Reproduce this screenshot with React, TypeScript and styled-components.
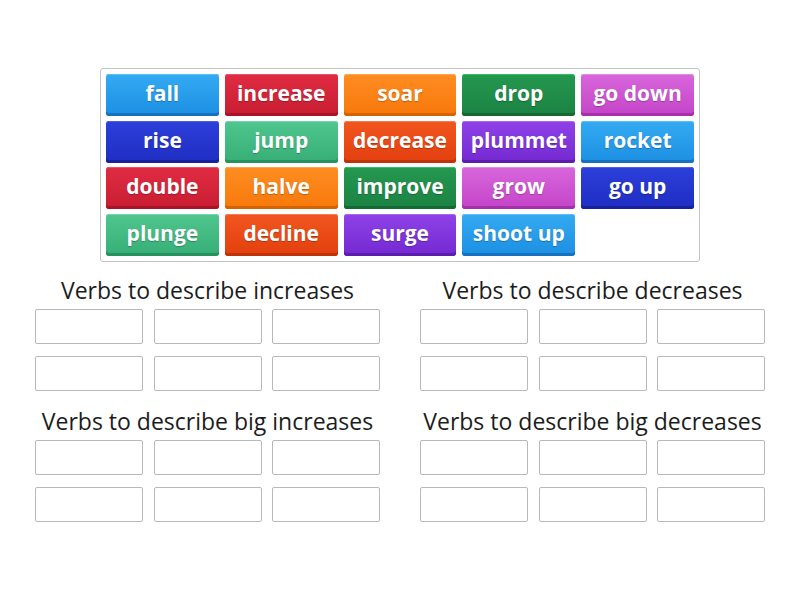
import styled, { createGlobalStyle } from "styled-components";

const GlobalStyle = createGlobalStyle`
  html, body {
    margin: 0;
    padding: 0;
    background: #ffffff;
    font-family: "Open Sans", "Liberation Sans", sans-serif;
  }
`;

type Tone =
  | "sky"
  | "crimson"
  | "orange"
  | "forest"
  | "orchid"
  | "navy"
  | "mint"
  | "flame"
  | "violet";

const tones: Record<Tone, { top: string; bottom: string; edge: string; light: string }> = {
  sky: { top: "#34aaf2", bottom: "#1c8fe2", edge: "#1672c0", light: "#5cc0f8" },
  crimson: { top: "#e02c42", bottom: "#c81d31", edge: "#a81426", light: "#ea5466" },
  orange: { top: "#ff8d22", bottom: "#f7780a", edge: "#d66300", light: "#ffa552" },
  forest: { top: "#25984f", bottom: "#1b8243", edge: "#146a35", light: "#2fc062" },
  orchid: { top: "#d866dc", bottom: "#c444c8", edge: "#a630aa", light: "#e68aea" },
  navy: { top: "#2c40da", bottom: "#1f2dc2", edge: "#17219e", light: "#4d5ee6" },
  mint: { top: "#4ec68e", bottom: "#36ae76", edge: "#27925f", light: "#72d8a8" },
  flame: { top: "#f2561f", bottom: "#e23f0e", edge: "#c03208", light: "#f67a4c" },
  violet: { top: "#8e42e8", bottom: "#7428d0", edge: "#5c1cae", light: "#a768f0" },
};

const Page = styled.div`
  width: 800px;
  padding-top: 68px;
  box-sizing: border-box;
`;

const Board = styled.div`
  width: 600px;
  margin: 0 auto;
  box-sizing: border-box;
  border: 1px solid #c4c4c4;
  border-radius: 3px;
  padding: 5px;
  display: grid;
  grid-template-columns: repeat(5, 1fr);
  grid-auto-rows: 42px;
  column-gap: 6px;
  row-gap: 4.7px;
`;

const Tile = styled.div<{ $tone: Tone }>`
  display: flex;
  align-items: center;
  justify-content: center;
  border-radius: 3px;
  background: linear-gradient(
    180deg,
    ${(p) => tones[p.$tone].top} 0%,
    ${(p) => tones[p.$tone].bottom} 100%
  );
  box-shadow: inset 0 1px 0 ${(p) => tones[p.$tone].light},
    inset 0 -3px 0 ${(p) => tones[p.$tone].edge};
  color: #ffffff;
  font-family: "Open Sans", "Liberation Sans", sans-serif;
  font-weight: 700;
  font-size: 21px;
  line-height: 1;
  padding-bottom: 3px;
  box-sizing: border-box;
  text-shadow: 0 1px 1px rgba(0, 0, 0, 0.25);
`;

const Groups = styled.div`
  display: grid;
  grid-template-columns: 345px 345px;
  column-gap: 40px;
  row-gap: 15px;
  padding: 13px 35px 0;
`;

const Group = styled.div`
  display: flex;
  flex-direction: column;
`;

const GroupTitle = styled.div`
  height: 30px;
  line-height: 30px;
  text-align: center;
  font-size: 23px;
  color: #1c1c1c;
  white-space: nowrap;
  margin-bottom: 4px;
`;

const Slots = styled.div`
  display: grid;
  grid-template-columns: repeat(3, 1fr);
  grid-auto-rows: 35px;
  column-gap: 10.5px;
  row-gap: 12px;
`;

const Slot = styled.div`
  border: 1px solid #b9b9b9;
  border-radius: 2px;
  background: #ffffff;
`;

const words: [string, Tone][] = [
  ["fall", "sky"],
  ["increase", "crimson"],
  ["soar", "orange"],
  ["drop", "forest"],
  ["go down", "orchid"],
  ["rise", "navy"],
  ["jump", "mint"],
  ["decrease", "flame"],
  ["plummet", "violet"],
  ["rocket", "sky"],
  ["double", "crimson"],
  ["halve", "orange"],
  ["improve", "forest"],
  ["grow", "orchid"],
  ["go up", "navy"],
  ["plunge", "mint"],
  ["decline", "flame"],
  ["surge", "violet"],
  ["shoot up", "sky"],
];

const titles = [
  "Verbs to describe increases",
  "Verbs to describe decreases",
  "Verbs to describe big increases",
  "Verbs to describe big decreases",
];

export default function App() {
  return (
    <Page>
      <GlobalStyle />
      <Board>
        {words.map(([w, t]) => (
          <Tile key={w} $tone={t}>
            {w}
          </Tile>
        ))}
      </Board>
      <Groups>
        {titles.map((t) => (
          <Group key={t}>
            <GroupTitle>{t}</GroupTitle>
            <Slots>
              {Array.from({ length: 6 }).map((_, i) => (
                <Slot key={i} />
              ))}
            </Slots>
          </Group>
        ))}
      </Groups>
    </Page>
  );
}
